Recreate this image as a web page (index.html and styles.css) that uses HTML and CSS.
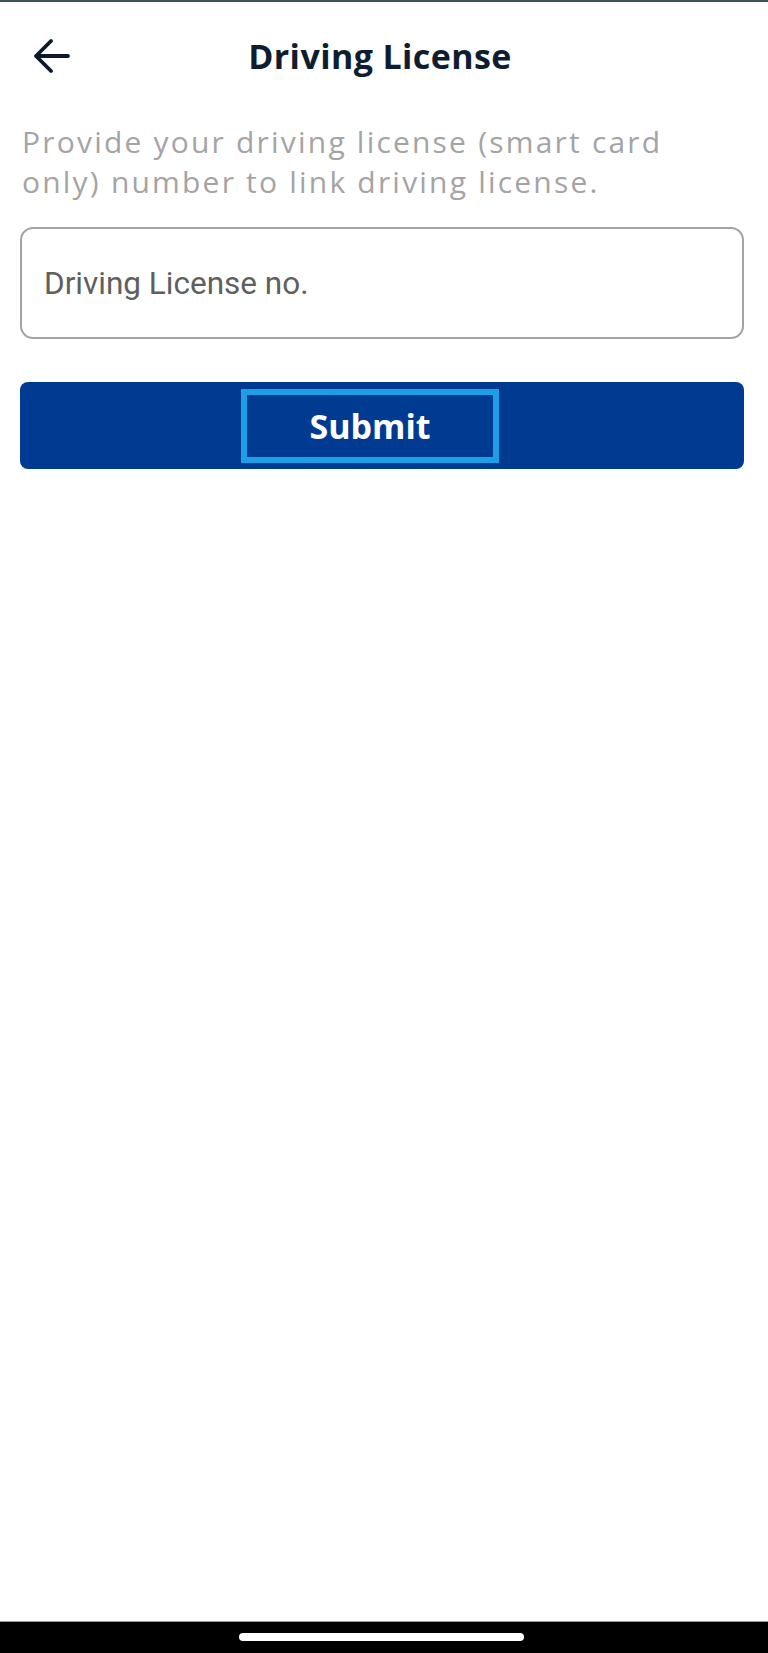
FILE: index.html
```html
<!DOCTYPE html>
<html lang="en">
<head>
<meta charset="utf-8">
<title>Driving License</title>
<link rel="stylesheet" href="styles.css">
</head>
<body>
<div class="screen">
  <div class="status-line"></div>
  <header class="topbar">
    <button class="back" aria-label="Back">
      <svg width="36" height="36" viewBox="0 0 36 36" fill="none" stroke="#0e1a2b" stroke-width="3.8" stroke-linecap="round" stroke-linejoin="round">
        <path d="M34 18H3"/>
        <path d="M17 3L2 18L17 33"/>
      </svg>
    </button>
    <h1 class="title">Driving License</h1>
  </header>
  <main class="content">
    <p class="desc">Provide your driving license (smart card only) number to link driving license.</p>
    <label class="field">
      <input class="field-input" type="text" placeholder="Driving License no.">
    </label>
    <button class="submit"><span class="submit-focus">Submit</span></button>
  </main>
  <div class="spacer"></div>
  <nav class="navbar"><span class="pill"></span></nav>
</div>
</body>
</html>
```
FILE: styles.css
```css
* { box-sizing: border-box; }
html, body { margin: 0; padding: 0; background: #ffffff; }
.screen {
  width: 768px;
  height: 1653px;
  display: flex;
  flex-direction: column;
  background: #ffffff;
}
.status-line {
  height: 2px;
  background: #3f5459;
  flex: none;
}
.topbar {
  height: 108px;
  flex: none;
  display: flex;
  align-items: center;
  position: relative;
  padding-left: 34px;
}
.back {
  border: 0;
  background: none;
  padding: 0;
  width: 36px;
  height: 36px;
  display: flex;
  align-items: center;
  justify-content: center;
}
.title {
  position: absolute;
  left: 0;
  right: 0;
  top: 0;
  bottom: 0;
  margin: 0;
  display: flex;
  align-items: center;
  justify-content: center;
  padding-right: 8px;
  font-family: "Open Sans", "Liberation Sans", sans-serif;
  font-weight: 700;
  font-size: 34px;
  letter-spacing: 0.4px;
  color: #0f1d31;
  pointer-events: none;
}
.content {
  padding: 0 24px 0 20px;
  display: flex;
  flex-direction: column;
}
.desc {
  margin: 12px 0 0 0;
  font-family: "Open Sans", "Liberation Sans", sans-serif;
  font-weight: 400;
  font-size: 30px;
  line-height: 40px;
  letter-spacing: 2.2px;
  color: #a4a4a4;
  padding-left: 2px;
}
.field {
  display: flex;
  margin-top: 25px;
  height: 112px;
  border: 2px solid #a3a3a3;
  border-radius: 13px;
  align-items: center;
  padding-left: 22px;
}
.field-input {
  border: 0;
  outline: none;
  background: transparent;
  width: 100%;
  font-family: Roboto, "Liberation Sans", sans-serif;
  font-size: 31.5px;
  color: #5f5f5f;
  padding: 0;
}
.field-input::placeholder {
  color: #5f5f5f;
  opacity: 1;
}
.submit {
  margin-top: 43px;
  height: 87px;
  border: 0;
  border-radius: 8px;
  background: #003a91;
  display: flex;
  align-items: center;
  justify-content: center;
  padding: 0 24px 0 0;
}
.submit-focus {
  width: 258px;
  height: 74px;
  border: 6px solid #1b9fe6;
  display: flex;
  align-items: center;
  justify-content: center;
  font-family: "Open Sans", "Liberation Sans", sans-serif;
  font-weight: 700;
  font-size: 34px;
  color: #ffffff;
}
.spacer { flex: 1; }
.navbar {
  height: 32px;
  flex: none;
  background: #000000;
  border-top: 1px solid #9c9c9c;
  display: flex;
  justify-content: center;
  padding-top: 11px;
}
.pill {
  width: 285px;
  height: 8px;
  border-radius: 4px;
  background: #ffffff;
  margin-right: 5px;
}
```
